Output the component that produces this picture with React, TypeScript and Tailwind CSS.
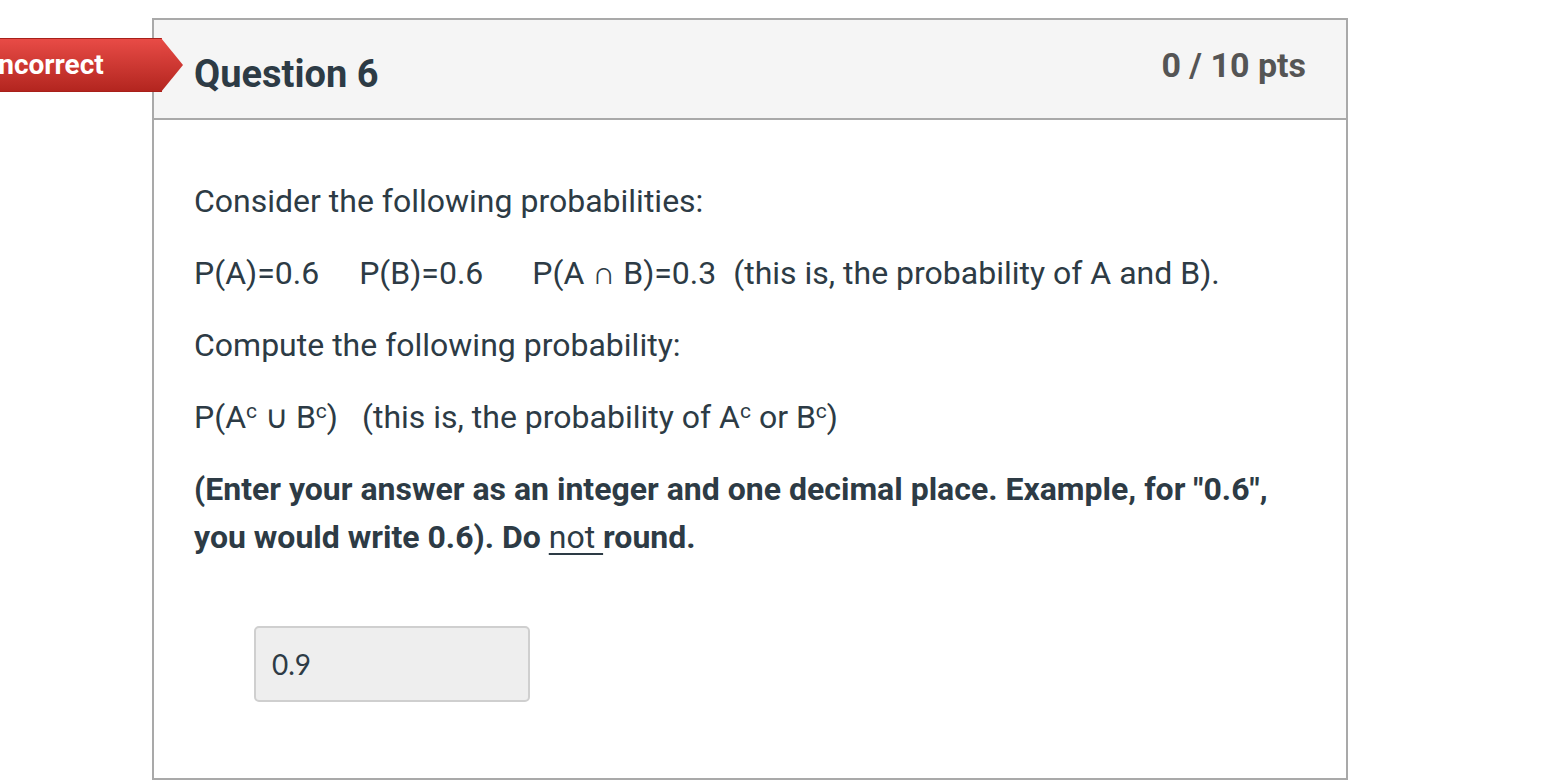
export default function App() {
  return (
    <div className="relative h-[784px] w-[1566px] overflow-hidden bg-white font-['Roboto',sans-serif] text-[#2d3b45]">
      {/* incorrect banner */}
      <div className="absolute left-[-30px] top-[38px] flex h-[54px] items-center">
        <div className="flex h-[54px] w-[192px] items-center border-y border-[#a8201a] bg-gradient-to-b from-[#e84b46] to-[#b3251f] pl-[20px] text-[28px] font-bold text-white">
          Incorrect
        </div>
        <svg width="22" height="54" viewBox="0 0 22 54" className="-ml-px">
          <defs>
            <linearGradient id="g" x1="0" y1="0" x2="0" y2="1">
              <stop offset="0" stopColor="#e84b46" />
              <stop offset="1" stopColor="#b3251f" />
            </linearGradient>
          </defs>
          <polygon points="0,0 0,54 22,27" fill="url(#g)" />
        </svg>
      </div>

      <div className="ml-[152px] mt-[18px] h-[762px] w-[1196px] border-2 border-[#a9a9a9]">
        <div className="flex h-[100px] items-start justify-between border-b-2 border-[#a9a9a9] bg-[#f5f5f5] pl-[40px] pr-[40px]">
          <h2 className="mt-[32px] text-[38px] font-bold leading-[44px]">Question 6</h2>
          <div className="mt-[23px] text-[34px] font-bold leading-[44px] text-[#555]">0 / 10 pts</div>
        </div>

        <div className="px-[40px] pt-[57px] text-[32px] leading-[48px]">
          <p className="mb-[24px]">Consider the following probabilities:</p>
          <p className="mb-[24px]">
            P(A)=0.6<span className="ml-[40px]">P(B)=0.6</span>
            <span className="ml-[49px]">
              P(A <span className="font-['DejaVu_Sans',sans-serif] font-extralight">∩</span> B)=0.3
            </span>
            <span className="ml-[17px]">(this is, the probability of A and B).</span>
          </p>
          <p className="mb-[24px]">Compute the following probability:</p>
          <p className="mb-[24px]">
            P(A<sup className="text-[21px]">c</sup>{' '}
            <span className="font-['DejaVu_Sans',sans-serif] font-extralight">∪</span> B<sup className="text-[21px]">c</sup>)
            <span className="ml-[24px]">
              (this is, the probability of A<sup className="text-[21px]">c</sup> or B<sup className="text-[21px]">c</sup>)
            </span>
          </p>
          <p className="font-bold">
            (Enter your answer as an integer and one decimal place. Example, for "0.6", you would write 0.6). Do{' '}
            <span className="font-normal underline decoration-[2px] underline-offset-[5px]">not </span>round.
          </p>

          <div className="ml-[60px] mt-[65px] flex h-[76px] w-[276px] items-center rounded-[5px] border-2 border-[#cfcfcf] bg-[#eeeeee] pl-[16px] font-['Lato',sans-serif] text-[28px] text-[#2d3b45]">
            0.9
          </div>
        </div>
      </div>
    </div>
  );
}
